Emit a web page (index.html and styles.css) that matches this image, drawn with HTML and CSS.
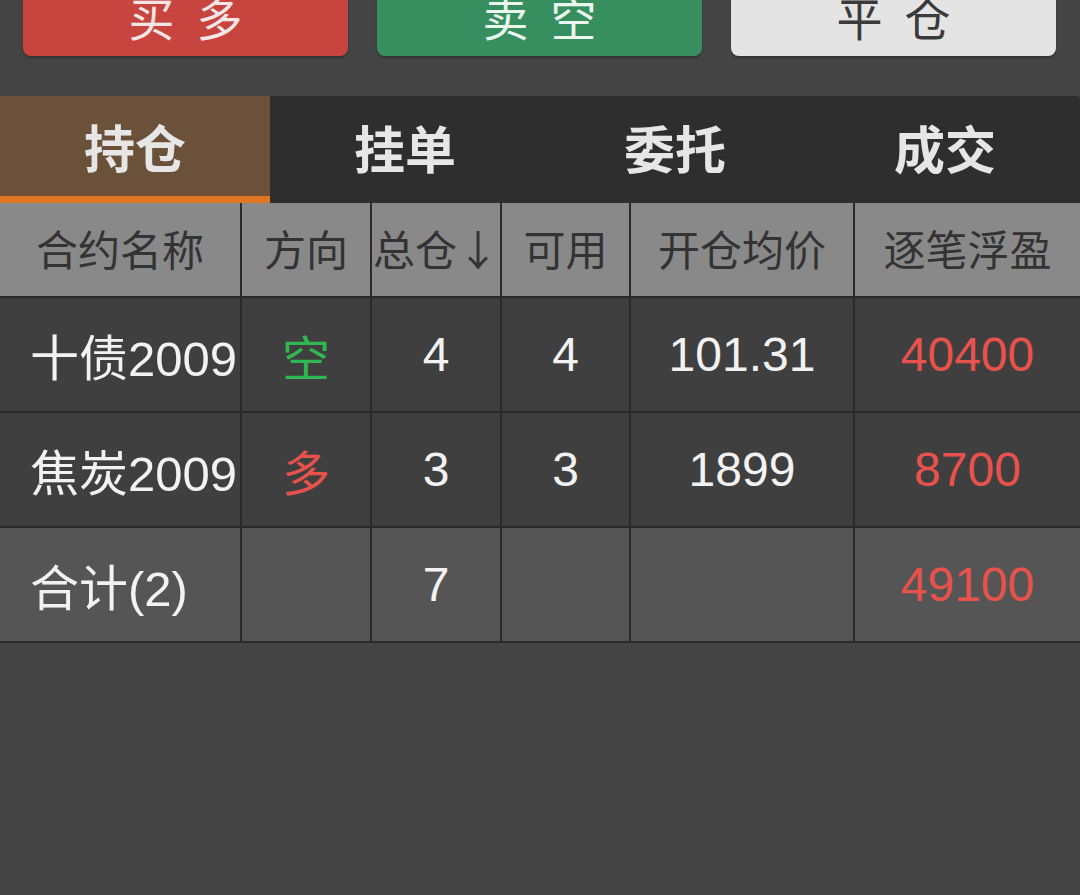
FILE: index.html
```html
<!DOCTYPE html>
<html lang="zh">
<head>
<meta charset="utf-8">
<link rel="stylesheet" href="styles.css">
</head>
<body>
<div class="page">
  <div class="actions">
    <div class="btn btn-buy">买多</div>
    <div class="btn btn-sell">卖空</div>
    <div class="btn btn-close">平仓</div>
  </div>
  <div class="tabs">
    <div class="tab active">持仓</div>
    <div class="tab">挂单</div>
    <div class="tab">委托</div>
    <div class="tab">成交</div>
  </div>
  <div class="table">
    <div class="th">合约名称</div>
    <div class="th">方向</div>
    <div class="th">总仓↓</div>
    <div class="th">可用</div>
    <div class="th">开仓均价</div>
    <div class="th">逐笔浮盈</div>

    <div class="td left">十债2009</div>
    <div class="td green">空</div>
    <div class="td">4</div>
    <div class="td">4</div>
    <div class="td">101.31</div>
    <div class="td red">40400</div>

    <div class="td left">焦炭2009</div>
    <div class="td red">多</div>
    <div class="td">3</div>
    <div class="td">3</div>
    <div class="td">1899</div>
    <div class="td red">8700</div>

    <div class="td total left">合计(2)</div>
    <div class="td total"></div>
    <div class="td total">7</div>
    <div class="td total"></div>
    <div class="td total"></div>
    <div class="td total red">49100</div>
  </div>
</div>
</body>
</html>
```

FILE: styles.css
```css
html, body {
  margin: 0;
  padding: 0;
  background: #444444;
  overflow: hidden;
}
body {
  width: 1080px;
  height: 895px;
  font-family: "Liberation Sans", "Noto Sans CJK SC", sans-serif;
}
.page {
  width: 1080px;
}
.actions {
  display: flex;
  gap: 29px;
  padding: 0 24px 0 23px;
  height: 96px;
  box-sizing: border-box;
}
.btn {
  flex: 1;
  height: 76px;
  margin-top: -20px;
  border-radius: 8px;
  display: flex;
  align-items: center;
  justify-content: center;
  font-family: "Noto Sans CJK SC", sans-serif;
  font-size: 46px;
  letter-spacing: 22px;
  text-indent: 22px;
  line-height: 1;
  padding-bottom: 4px;
  box-sizing: border-box;
  box-shadow: 0 2px 2px rgba(0,0,0,0.25);
}
.btn-buy { background: #c8443f; color: #f3e6e6; }
.btn-sell { background: #378f5f; color: #eaf6ee; }
.btn-close { background: #e4e4e4; color: #3a3a3a; }

.tabs {
  display: flex;
  background: #2e2e2e;
  height: 107px;
  border-top-right-radius: 4px;
}
.tab {
  width: 270px;
  display: flex;
  align-items: center;
  justify-content: center;
  font-family: "Noto Sans CJK SC", sans-serif;
  font-weight: 700;
  font-size: 51px;
  color: #e6e6e6;
  box-sizing: border-box;
  padding-bottom: 5px;
}
.tab.active {
  background: #6b5139;
  border-bottom: 7px solid #e07623;
  padding-bottom: 0;
}

.table {
  display: grid;
  grid-template-columns: 240px 128px 128px 127px 222px 1fr;
  grid-template-rows: 93px 113px 113px 113px;
  gap: 2px;
  background: #2a2a2a;
  border-bottom: 2px solid #2a2a2a;
}
.th {
  background: #898989;
  color: #333333;
  font-family: "Noto Sans CJK SC", sans-serif;
  font-size: 42px;
  display: flex;
  align-items: center;
  justify-content: center;
  padding-bottom: 4px;
  box-sizing: border-box;
}
.td {
  background: #3f3f3f;
  color: #f2f2f2;
  font-size: 48px;
  display: flex;
  align-items: center;
  justify-content: center;
}
.td.total {
  background: #555555;
}
.td.left {
  justify-content: flex-start;
  padding-left: 30px;
  font-size: 49px;
}
.red { color: #e8524c; }
.green { color: #2fb751; }
```
